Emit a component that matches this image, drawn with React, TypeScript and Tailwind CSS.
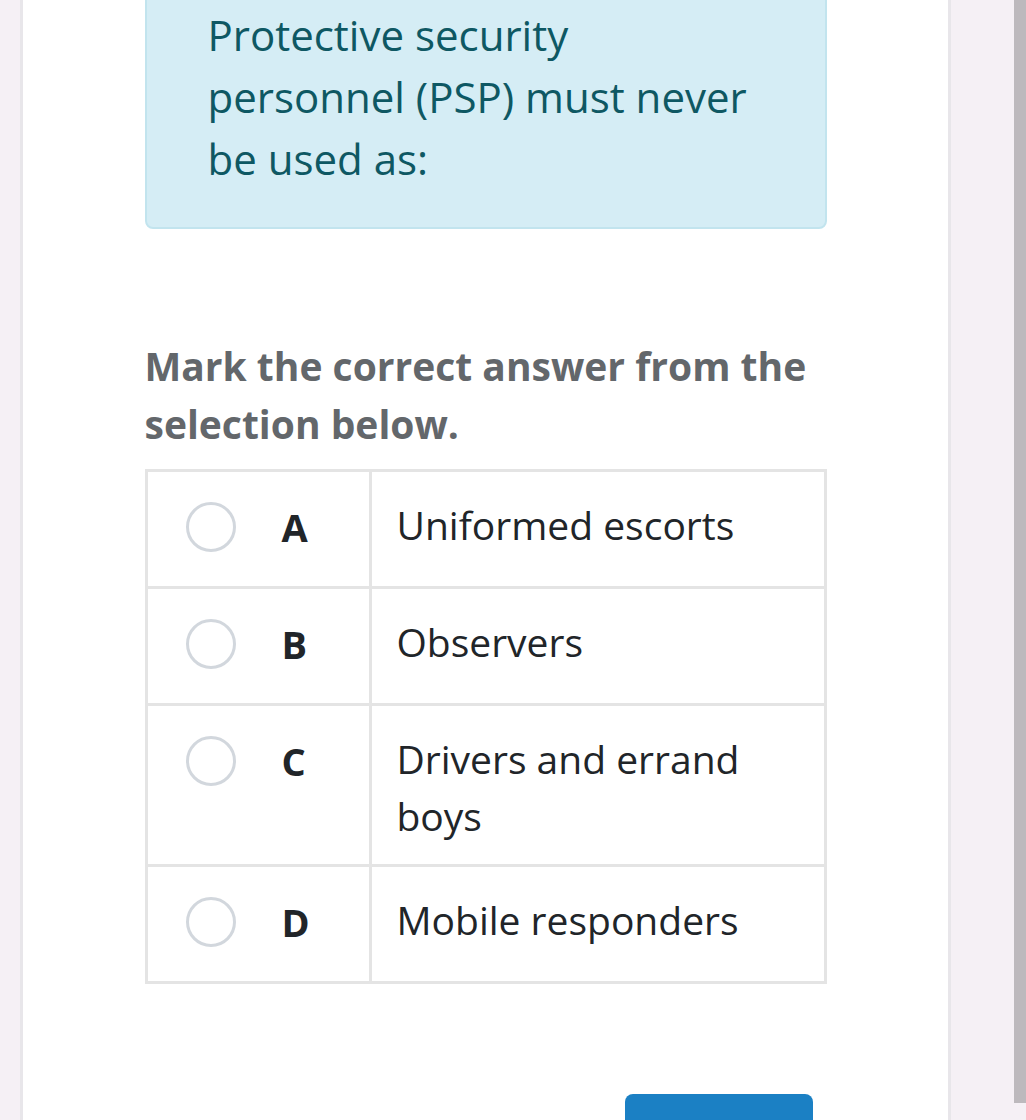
import React from 'react';

const options = [
  { letter: 'A', text: 'Uniformed escorts' },
  { letter: 'B', text: 'Observers' },
  { letter: 'C', text: 'Drivers and errand boys' },
  { letter: 'D', text: 'Mobile responders' },
];

export default function App() {
  return (
    <div
      className="flex h-[1120px] w-full overflow-hidden bg-[#f5f0f5]"
      style={{ fontFamily: '"Open Sans", "Noto Sans", sans-serif' }}
    >
      <div className="w-[20px] shrink-0" />
      <div className="w-[931px] shrink-0 border-x-[3px] border-[#e8e6ea] bg-white">
        <div className="mx-auto w-[682px]">
          {/* Question box */}
          <div className="-mt-[40px] rounded-lg border-2 border-[#c2e4ee] bg-[#d5edf5] pb-[37px] pl-[61px] pt-[42px] text-[42px] leading-[62px] text-[#0e5863]">
            <p className="w-[552px]">Protective security personnel (PSP) must never be used as:</p>
          </div>

          <h2 className="mt-[108px] text-[39px] font-bold leading-[58px] text-[#63676b]">
            Mark the correct answer from the selection below.
          </h2>

          {/* Options table */}
          <div className="mt-[16px] border-[3px] border-[#e4e4e4]">
            {options.map((opt, i) => (
              <div
                key={opt.letter}
                className={`flex ${i > 0 ? 'min-h-[117px] border-t-[3px] border-[#e4e4e4]' : 'min-h-[114px]'}`}
              >
                <div className="flex w-[224px] shrink-0 items-start border-r-[3px] border-[#e4e4e4] pl-[38px] pt-[28px]">
                  <div className="flex h-[54px] items-center">
                    <div className="h-[50px] w-[50px] rounded-full border-[3px] border-[#d2d7dd] bg-white" />
                    <div className="ml-[46px] w-[24px] text-center text-[38px] font-bold leading-[54px] text-[#212529]">
                      {opt.letter}
                    </div>
                  </div>
                </div>
                <div className="flex-1 pb-[20px] pl-[25px] pr-[30px] pt-[24px] text-[39px] leading-[57px] text-[#212529]">
                  {opt.text}
                </div>
              </div>
            ))}
          </div>

          <div className="mt-[110px] flex justify-end pr-[14px]">
            <button className="h-[60px] w-[188px] rounded-lg bg-[#1b80c4]" />
          </div>
        </div>
      </div>
      <div className="flex-1" />
      <div className="w-[12px] shrink-0">
        <div className="h-[1103px] bg-[#bdb9bd]" />
      </div>
    </div>
  );
}
